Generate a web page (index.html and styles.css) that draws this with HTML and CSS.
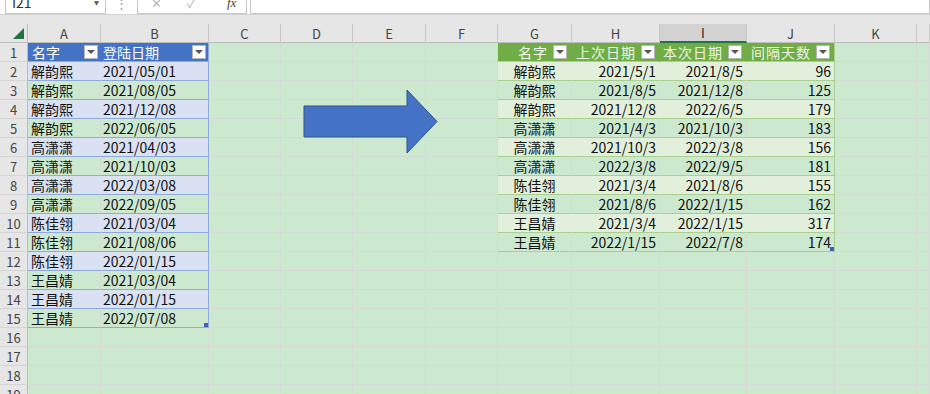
FILE: index.html
```html
<!DOCTYPE html>
<html lang="zh-CN">
<head>
  <meta charset="UTF-8">
  <title>登陆记录</title>
  <link rel="stylesheet" href="styles.css">
</head>
<body>
  <div class="toolbar">
    <div class="name-box">I21<span class="caret">▾</span></div>
    <div class="dots">⋮</div>
    <div class="fx-box">
      <span class="fx-btn">✕</span>
      <span class="fx-btn">✓</span>
      <span class="fx-label">fx</span>
    </div>
    <div class="formula-input"></div>
  </div>
  <div class="spacer"></div>

  <div class="sheet" id="sheet"></div>

  <svg class="arrow" width="138" height="66" viewBox="0 0 138 66">
    <polygon points="1,17 104,17 104,1 134,32.5 104,64 104,48 1,48" fill="#4472c4" stroke="#2f528f" stroke-width="1"/>
  </svg>

  <script>
    // last column is only a sliver, its letter falls outside the window
    const cols = ["A", "B", "C", "D", "E", "F", "G", "H", "I", "J", "K", ""];
    const selectedCol = "I";
    const rowCount = 19;

    const logins = [
      ["名字", "登陆日期"],
      ["解韵熙", "2021/05/01"],
      ["解韵熙", "2021/08/05"],
      ["解韵熙", "2021/12/08"],
      ["解韵熙", "2022/06/05"],
      ["高潇潇", "2021/04/03"],
      ["高潇潇", "2021/10/03"],
      ["高潇潇", "2022/03/08"],
      ["高潇潇", "2022/09/05"],
      ["陈佳翎", "2021/03/04"],
      ["陈佳翎", "2021/08/06"],
      ["陈佳翎", "2022/01/15"],
      ["王昌婧", "2021/03/04"],
      ["王昌婧", "2022/01/15"],
      ["王昌婧", "2022/07/08"]
    ];

    const gaps = [
      ["名字", "上次日期", "本次日期", "间隔天数"],
      ["解韵熙", "2021/5/1", "2021/8/5", "96"],
      ["解韵熙", "2021/8/5", "2021/12/8", "125"],
      ["解韵熙", "2021/12/8", "2022/6/5", "179"],
      ["高潇潇", "2021/4/3", "2021/10/3", "183"],
      ["高潇潇", "2021/10/3", "2022/3/8", "156"],
      ["高潇潇", "2022/3/8", "2022/9/5", "181"],
      ["陈佳翎", "2021/3/4", "2021/8/6", "155"],
      ["陈佳翎", "2021/8/6", "2022/1/15", "162"],
      ["王昌婧", "2021/3/4", "2022/1/15", "317"],
      ["王昌婧", "2022/1/15", "2022/7/8", "174"]
    ];

    const sheet = document.getElementById("sheet");

    function makeCell(cls, text) {
      const div = document.createElement("div");
      div.className = cls;
      if (text) {
        const span = document.createElement("span");
        span.textContent = text;
        div.appendChild(span);
      }
      sheet.appendChild(div);
      return div;
    }

    function addFilter(div) {
      const btn = document.createElement("span");
      btn.className = "filter";
      div.appendChild(btn);
    }

    // column letters
    makeCell("corner");
    cols.forEach(c => {
      makeCell("cell col-head" + (c === selectedCol ? " selected" : ""), c);
    });

    for (let r = 1; r <= rowCount; r++) {
      makeCell("cell row-head", String(r));

      cols.forEach((c, i) => {
        let cls = "cell";
        let text;
        let isHead = false;

        if (i <= 1 && r <= logins.length) {
          text = logins[r - 1][i];
          if (r === 1) {
            cls += " blue-head";
            isHead = true;
          } else {
            cls += " blue-row";
            if (r % 2 === 0) cls += " blue-band";
          }
          if (i === 1) cls += " blue-edge";
          if (i === 1 && r === logins.length) cls += " handle";
        } else if (i >= 6 && i <= 9 && r <= gaps.length) {
          text = gaps[r - 1][i - 6];
          if (r === 1) {
            cls += " green-head";
            isHead = true;
          } else {
            cls += " green-row";
            cls += i === 6 ? " center" : " right";
            if (r % 2 === 0) cls += " green-band";
          }
          if (i === 9) cls += " green-edge";
          if (i === 9 && r === gaps.length) cls += " handle";
        }

        const div = makeCell(cls, text);
        if (isHead) addFilter(div);
      });
    }
  </script>
</body>
</html>
```

FILE: styles.css
```css
* {
  box-sizing: border-box;
}
body {
  margin: 0;
  height: 394px;
  overflow: hidden;
  position: relative;
  background: #e6e6e6;
  font-family: "Noto Sans CJK SC", "Liberation Sans", sans-serif;
}

/* formula bar */
.toolbar {
  display: flex;
  height: 25px;
  margin-top: -10px;
  padding-left: 5px;
  background: #fff;
  border-bottom: 1px solid #d4d4d4;
}
.name-box {
  position: relative;
  width: 101px;
  height: 24px;
  border: 1px solid #c6c6c6;
  padding: 0 0 0 6px;
  font-size: 14px;
  line-height: 22px;
  color: #333;
}
.caret {
  position: absolute;
  right: 6px;
  top: 0;
  font-size: 10px;
  color: #666;
}
.dots {
  width: 31px;
  text-align: center;
  color: #9a9a9a;
  font-size: 13px;
  line-height: 26px;
}
.fx-box {
  display: flex;
  align-items: flex-end;
  width: 110px;
  height: 24px;
  border: 1px solid #c6c6c6;
  padding: 0 0 1px 13px;
  gap: 25px;
  font-size: 13px;
}
.fx-btn {
  color: #b8b8b8;
  line-height: 18px;
}
.fx-label {
  margin-left: 6px;
  font-family: "Liberation Serif", serif;
  font-style: italic;
  color: #444;
  line-height: 18px;
}
.formula-input {
  flex: 1;
  height: 24px;
  margin-left: 3px;
  border: 1px solid #c6c6c6;
}
.spacer {
  height: 9px;
}

/* grid */
.sheet {
  display: grid;
  grid-template-columns: 28px 73px 108px 72px 72px 73px 72px 74px 88px 87px 88px 82px 1fr;
  grid-auto-rows: 19px;
  background: #cce8cf;
}
.corner {
  background: #e6e6e6;
  border-right: 1px solid #bdbdbd;
  border-bottom: 1px solid #bdbdbd;
  position: relative;
}
.corner::after {
  content: "";
  position: absolute;
  right: 3px;
  bottom: 3px;
  border-left: 11px solid transparent;
  border-bottom: 11px solid #217346;
}
.cell {
  position: relative;
  display: flex;
  align-items: center;
  padding: 0 3px;
  border-right: 1px solid #d5dad5;
  border-bottom: 1px solid #d5dad5;
  font-size: 14px;
  color: #111;
  white-space: nowrap;
  overflow: hidden;
}
.col-head {
  justify-content: center;
  background: #e6e6e6;
  border-right-color: #c9c9c9;
  border-bottom-color: #bdbdbd;
  font-size: 13px;
  color: #444;
}
.col-head.selected {
  background: #d2d2d2;
  border-bottom: 2px solid #217346;
  color: #222;
}
.row-head {
  justify-content: center;
  background: #e6e6e6;
  border-right-color: #bdbdbd;
  border-bottom-color: #d4d4d4;
  font-size: 13px;
  color: #444;
}

/* left table */
.blue-head {
  background: #4472c4;
  color: #fff;
  border-right-color: #4472c4;
  border-bottom-color: #8ea9db;
  padding: 0 2px 0 4px;
}
.blue-row {
  border-bottom-color: #8ea9db;
}
.blue-band {
  background: #d9e1f2;
  border-right-color: #d9e1f2;
}
.blue-edge {
  border-right-color: #8ea9db;
  padding-left: 2px;
}
.blue-head .filter {
  margin-left: auto;
}

/* right table */
.green-head {
  justify-content: flex-end;
  gap: 5px;
  background: #70ad47;
  color: #eef6e8;
  border-right-color: #70ad47;
  border-bottom-color: #a9d08e;
  padding: 0 4px 0 0;
  letter-spacing: 1px;
}
.green-row {
  border-bottom-color: #a9d08e;
}
.green-band {
  background: #e2efda;
  border-right-color: #e2efda;
}
.green-edge {
  border-right-color: #a9d08e;
}
.center {
  justify-content: center;
}
.right {
  justify-content: flex-end;
}

.filter {
  flex: none;
  display: flex;
  align-items: center;
  justify-content: center;
  width: 14px;
  height: 14px;
  background: #fff;
  border: 1px solid #b4b4b4;
}
.filter::after {
  content: "";
  border-left: 4px solid transparent;
  border-right: 4px solid transparent;
  border-top: 4px solid #555;
}

.handle::after {
  content: "";
  position: absolute;
  right: 0;
  bottom: 0;
  width: 4px;
  height: 4px;
  background: #3f5fbf;
}

.arrow {
  position: absolute;
  left: 303px;
  top: 89px;
}
```
